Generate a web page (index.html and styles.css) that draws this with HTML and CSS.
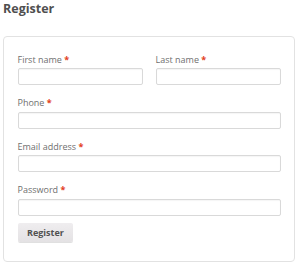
FILE: index.html
```
<!DOCTYPE html>
<html lang="en">
<head>
    <meta charset="UTF-8">
    <title>Register</title>
    <link rel="stylesheet" href="styles.css">
</head>
<body>
    <div class="page">
        <h2 class="title">Register</h2>
        <form class="register-box">
            <div class="row split">
                <div class="field">
                    <label>First name <span class="req">*</span></label>
                    <input type="text" class="input">
                </div>
                <div class="field">
                    <label>Last name <span class="req">*</span></label>
                    <input type="text" class="input">
                </div>
            </div>
            <div class="row">
                <label>Phone <span class="req">*</span></label>
                <input type="text" class="input">
            </div>
            <div class="row">
                <label>Email address <span class="req">*</span></label>
                <input type="text" class="input">
            </div>
            <div class="row last">
                <label>Password <span class="req">*</span></label>
                <input type="password" class="input">
            </div>
            <button type="button" class="btn">Register</button>
        </form>
    </div>
</body>
</html>
```

FILE: styles.css
```
body {
    margin: 0;
    padding: 0;
    background: #fff;
    font-family: "Open Sans", "Liberation Sans", sans-serif;
    color: #515151;
}

.page {
    padding: 0 5px 0 3px;
}

.title {
    margin: 0 0 18px 0;
    font-size: 12.5px;
    line-height: 18px;
    font-weight: 700;
    color: #4f4f4f;
}

/* Formular-Box */
.register-box {
    width: 292px;
    box-sizing: border-box;
    border: 1px solid #e2e2e2;
    border-radius: 4px;
    padding: 13.5px 13.5px 19px 13.5px;
}

.row {
    display: flex;
    flex-direction: column;
    margin-bottom: 9px;
}

.row.split {
    flex-direction: row;
    gap: 13px;
}

.row.last {
    margin-bottom: 7.5px;
}

.field {
    flex: 1;
    display: flex;
    flex-direction: column;
}

label {
    font-size: 9px;
    line-height: 17.5px;
    color: #6f6f6f;
}

.req {
    color: #e2401c;
    font-weight: 700;
}

.input {
    box-sizing: border-box;
    width: 100%;
    height: 17px;
    margin: 0;
    border: 1px solid #d9d9d9;
    border-radius: 2px;
    background: #fff;
    box-shadow: inset 0 1px 1px rgba(0, 0, 0, 0.04);
    padding: 0 4px;
}

.btn {
    display: block;
    height: 19px;
    padding: 0 9.5px;
    border: none;
    border-radius: 2px;
    background: linear-gradient(#efedef, #e4e2e4);
    box-shadow: 0 1px 0 rgba(0, 0, 0, 0.12);
    font-family: "Open Sans", "Liberation Sans", sans-serif;
    font-size: 9px;
    font-weight: 700;
    color: #515151;
}
```
